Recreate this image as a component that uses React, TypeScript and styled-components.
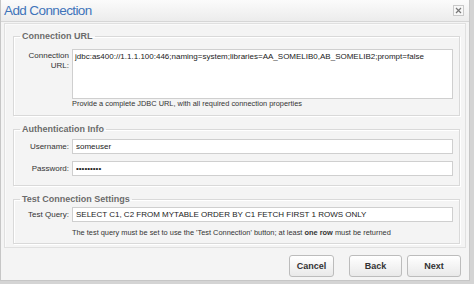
import React from 'react'
import styled, { createGlobalStyle } from 'styled-components'

const GlobalStyle = createGlobalStyle`
  html, body {
    margin: 0;
    padding: 0;
    background: #d4d4d4;
  }
  body {
    width: 474px;
    height: 284px;
    overflow: hidden;
    font-family: "Liberation Sans", Arial, sans-serif;
  }
`

const Dialog = styled.div`
  width: 470px;
  height: 281px;
  box-sizing: border-box;
  background: #f4f4f4;
  border: 1px solid #c6c6c6;
  border-top: none;
  display: flex;
  flex-direction: column;
`

const TitleBar = styled.div`
  height: 22px;
  box-sizing: border-box;
  display: flex;
  align-items: center;
  justify-content: space-between;
  padding: 0 5px 0 3px;
  background: linear-gradient(#fbfbfb, #ececec);
  border-bottom: 1px solid #d6d6d6;
`

const Title = styled.h1`
  margin: 0;
  font-size: 13.5px;
  font-weight: normal;
  letter-spacing: -0.6px;
  color: #3f74ba;
`

const CloseButton = styled.button`
  width: 11px;
  height: 11px;
  padding: 0;
  border: 1px solid #c9c9c9;
  background: #f7f7f7;
  display: flex;
  align-items: center;
  justify-content: center;
`

const Panel = styled.div`
  margin: 1px 3px 0 3px;
  height: 225px;
  box-sizing: border-box;
  border: 1px solid #e0e0e0;
  box-shadow: inset 1px 1px 0 #fafafa;
  padding: 7px 5px 0 8px;
  display: flex;
  flex-direction: column;
  gap: 8px;
`

const Group = styled.fieldset<{ $bottom: number }>`
  margin: 0;
  padding: 0 6px ${(p) => p.$bottom}px 0;
  border: 1px solid #d9d9d9;
  box-shadow: 1px 1px 0 #ffffff, inset 1px 1px 0 #ffffff;
  min-width: 0;
`

const Legend = styled.legend`
  margin-left: 6px;
  padding: 0 2px;
  font-size: 9px;
  font-weight: bold;
  color: #6b6b6b;
`

const FormGrid = styled.div<{ $top: number; $rowGap?: number }>`
  display: grid;
  grid-template-columns: 55px 1fr;
  column-gap: 3px;
  row-gap: ${(p) => p.$rowGap ?? 6}px;
  align-items: center;
  padding-top: ${(p) => p.$top}px;
`

const Label = styled.label<{ $top?: boolean }>`
  font-size: 8px;
  line-height: 10px;
  color: #333;
  text-align: right;
  align-self: ${(p) => (p.$top ? 'start' : 'center')};
  padding-top: ${(p) => (p.$top ? '2px' : '0')};
`

const TextInput = styled.input`
  height: 15px;
  box-sizing: border-box;
  border: 1px solid #cfcfcf;
  background: #fff;
  padding: 0 3px;
  font-family: "Liberation Sans", Arial, sans-serif;
  font-size: 8px;
  color: #222;
  outline: none;
  width: 100%;
`

const TextArea = styled.textarea`
  height: 50px;
  box-sizing: border-box;
  border: 1px solid #cfcfcf;
  background: #fff;
  padding: 2px 2px;
  font-family: "Liberation Sans", Arial, sans-serif;
  font-size: 8px;
  line-height: 10px;
  color: #222;
  resize: none;
  outline: none;
  width: 100%;
`

const Hint = styled.div<{ $shift: number }>`
  grid-column: 2;
  margin-top: ${(p) => p.$shift}px;
  font-size: 7.4px;
  line-height: 10px;
  color: #333;
  b {
    font-weight: bold;
  }
`

const Footer = styled.div`
  flex: 1;
  display: flex;
  justify-content: flex-end;
  align-items: center;
  padding: 4px 8px 0 0;
`

const Button = styled.button<{ $w: number; $gap?: number }>`
  width: ${(p) => p.$w}px;
  height: 22px;
  margin-left: ${(p) => p.$gap ?? 0}px;
  border: 1px solid #bcbcbc;
  border-radius: 3px;
  background: linear-gradient(#ffffff, #e9e9e9);
  font-family: "Liberation Sans", Arial, sans-serif;
  font-size: 9px;
  font-weight: bold;
  color: #333;
  padding: 0;
`

export default function App() {
  return (
    <>
      <GlobalStyle />
      <Dialog>
        <TitleBar>
          <Title>Add Connection</Title>
          <CloseButton aria-label="close">
            <svg width="7" height="7" viewBox="0 0 7 7">
              <path d="M1 1L6 6M6 1L1 6" stroke="#777" strokeWidth="1.2" />
            </svg>
          </CloseButton>
        </TitleBar>
        <Panel>
          <Group $bottom={6}>
            <Legend>Connection URL</Legend>
            <FormGrid $top={8}>
              <Label $top>Connection URL:</Label>
              <TextArea
                defaultValue="jdbc:as400://1.1.1.100:446;naming=system;libraries=AA_SOMELIB0,AB_SOMELIB2;prompt=false"
              />
              <Hint $shift={-6}>Provide a complete JDBC URL, with all required connection properties</Hint>
            </FormGrid>
          </Group>
          <Group $bottom={9}>
            <Legend>Authentication Info</Legend>
            <FormGrid $top={5} $rowGap={7}>
              <Label>Username:</Label>
              <TextInput defaultValue="someuser" />
              <Label>Password:</Label>
              <TextInput type="password" defaultValue="password1" />
            </FormGrid>
          </Group>
          <Group $bottom={5}>
            <Legend>Test Connection Settings</Legend>
            <FormGrid $top={3}>
              <Label>Test Query:</Label>
              <TextInput defaultValue="SELECT C1, C2 FROM MYTABLE ORDER BY C1 FETCH FIRST 1 ROWS ONLY" />
              <Hint $shift={0}>
                The test query must be set to use the 'Test Connection' button; at least <b>one row</b> must be
                returned
              </Hint>
            </FormGrid>
          </Group>
        </Panel>
        <Footer>
          <Button $w={45}>Cancel</Button>
          <Button $w={53} $gap={15}>Back</Button>
          <Button $w={54} $gap={5}>Next</Button>
        </Footer>
      </Dialog>
    </>
  )
}
